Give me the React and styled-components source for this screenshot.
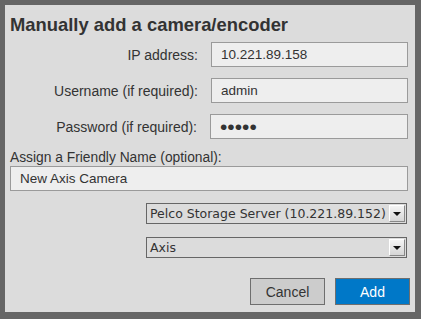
import styled, { createGlobalStyle } from 'styled-components';

const Global = createGlobalStyle`
    html, body {
        margin: 0;
        padding: 0;
        background: #666666;
    }
    body {
        font-family: "Liberation Sans", Arial, sans-serif;
        color: #333333;
    }
`;

const Panel = styled.div`
    box-sizing: border-box;
    margin: 5px 6px 0 5px;
    width: 410px;
    height: 307px;
    background: #dcdcdc;
    padding: 9px 7px 0 5px;
    display: flex;
    flex-direction: column;
`;

const Title = styled.h1`
    margin: 0;
    font-size: 18.4px;
    font-weight: bold;
    line-height: 22px;
    color: #333333;
`;

const Rows = styled.div`
    margin-top: 6px;
    display: flex;
    flex-direction: column;
    gap: 11px;
`;

const Row = styled.div`
    display: flex;
    align-items: center;
    gap: 13px;
`;

const Label = styled.label`
    width: 192px;
    text-align: right;
    font-size: 14px;
    color: #333333;
`;

const Input = styled.input`
    box-sizing: border-box;
    width: ${({ $full }) => ($full ? '398px' : '198px')};
    height: 25px;
    margin: 0;
    padding: 0 9px;
    border: 1px solid #9a9a9a;
    background: #eeeeee;
    font-family: "Liberation Sans", Arial, sans-serif;
    font-size: ${({ type }) => (type === 'password' ? '21px' : '13.5px')};
    color: #333333;
    outline: none;
`;

const FriendlyLabel = styled.label`
    display: block;
    margin-top: 11px;
    font-size: 13.8px;
    line-height: 15px;
    color: #333333;
`;

const FriendlyInput = styled(Input)`
    margin-top: 1px;
`;

const Selects = styled.div`
    margin-top: 12px;
    display: flex;
    flex-direction: column;
    align-items: flex-end;
    gap: 13px;
    padding-right: 1px;
`;

const Select = styled.div`
    box-sizing: border-box;
    width: 261px;
    height: 21px;
    border: 1px solid #666666;
    background: #dcdcdc;
    display: flex;
    align-items: stretch;
`;

const SelectValue = styled.span`
    flex: 1;
    padding-left: 3px;
    font-family: "DejaVu Sans", sans-serif;
    font-size: 12.5px;
    line-height: 19px;
    color: #333333;
    white-space: nowrap;
    overflow: hidden;
`;

const DropButton = styled.span`
    box-sizing: border-box;
    width: 16px;
    margin: 1px 1px 1px 0;
    border: 1px solid #ffffff;
    border-right-color: #888888;
    border-bottom-color: #888888;
    background: linear-gradient(#f4f4f4, #d6d6d6);
    display: flex;
    align-items: center;
    justify-content: center;

    &::after {
        content: '';
        border-left: 4px solid transparent;
        border-right: 4px solid transparent;
        border-top: 4px solid #111111;
    }
`;

const Actions = styled.div`
    margin-top: 20px;
    display: flex;
    justify-content: flex-end;
    gap: 10px;
    margin-right: -2px;
`;

const Button = styled.button`
    box-sizing: border-box;
    width: 75px;
    height: 27px;
    margin: 0;
    border: 1px solid #6e6e6e;
    background: ${({ $primary }) => ($primary ? '#0078c8' : '#cccccc')};
    color: ${({ $primary }) => ($primary ? '#ffffff' : '#333333')};
    font-family: "Liberation Sans", Arial, sans-serif;
    font-size: 14px;
    cursor: pointer;
`;

const fields = [
    { label: 'IP address:', value: '10.221.89.158', type: 'text' },
    { label: 'Username (if required):', value: 'admin', type: 'text' },
    { label: 'Password (if required):', value: 'abcde', type: 'password' },
];

const App = () => {
    return (
        <>
            <Global />
            <Panel>
                <Title>Manually add a camera/encoder</Title>
                <Rows>
                    {fields.map((f) => (
                        <Row key={f.label}>
                            <Label>{f.label}</Label>
                            <Input type={f.type} defaultValue={f.value} />
                        </Row>
                    ))}
                </Rows>
                <FriendlyLabel>Assign a Friendly Name (optional):</FriendlyLabel>
                <FriendlyInput $full defaultValue='New Axis Camera' />
                <Selects>
                    <Select>
                        <SelectValue>Pelco Storage Server (10.221.89.152)</SelectValue>
                        <DropButton />
                    </Select>
                    <Select>
                        <SelectValue>Axis</SelectValue>
                        <DropButton />
                    </Select>
                </Selects>
                <Actions>
                    <Button>Cancel</Button>
                    <Button $primary>Add</Button>
                </Actions>
            </Panel>
        </>
    );
};

export default App;
